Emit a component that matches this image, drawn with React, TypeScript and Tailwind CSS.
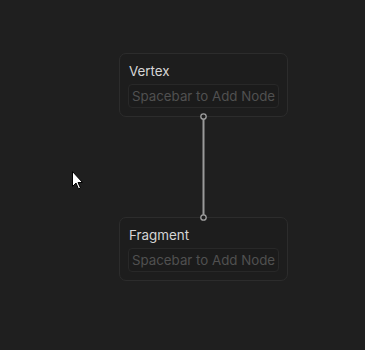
import React from "react";

function Node({ title, top }: { title: string; top: number }) {
  return (
    <div
      className="absolute left-[119px] w-[169px] h-[64px] rounded-[7px] border border-[#2c2c2c] bg-[#1d1d1d] px-[8px] pt-[8px]"
      style={{ top }}
    >
      <div className="text-[13.4px] leading-[18px] text-[#d6d6d6] pl-[1px]">{title}</div>
      <div className="mt-[4px] h-[24px] w-[151px] overflow-hidden whitespace-nowrap rounded-[4px] border border-[#282828] bg-[#1b1b1b] px-[3px] text-[13.3px] leading-[22px] text-[#505050]">
        Spacebar to Add Node
      </div>
    </div>
  );
}

export default function App() {
  return (
    <div
      className="relative w-[365px] h-[350px] overflow-hidden bg-[#1f1f1f]"
      style={{ fontFamily: "Inter, 'Noto Sans', sans-serif" }}
    >
      <Node title="Vertex" top={53} />
      <Node title="Fragment" top={217} />
      <svg className="absolute left-0 top-0" width="365" height="350">
        <line x1="203.5" y1="119" x2="203.5" y2="215" stroke="#9a9a9a" strokeWidth="2" />
        <circle cx="203.5" cy="116.5" r="2.7" fill="#1f1f1f" stroke="#a0a0a0" strokeWidth="1.3" />
        <circle cx="203.5" cy="217.5" r="2.7" fill="#1f1f1f" stroke="#a0a0a0" strokeWidth="1.3" />
        <path
          d="M72.5 171.5 L72.5 186.5 L76 183 L78.5 189 L80.5 188 L78 182.5 L82.5 182.5 Z"
          fill="#ffffff"
          stroke="#000000"
          strokeWidth="1"
        />
      </svg>
    </div>
  );
}
